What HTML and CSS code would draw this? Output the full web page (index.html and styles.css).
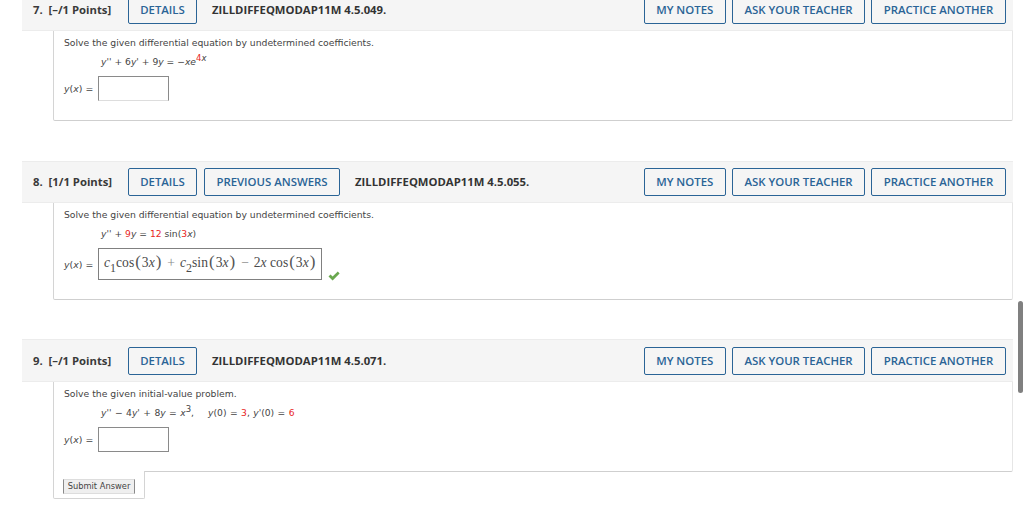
FILE: index.html
```html
<!DOCTYPE html>
<html lang="en">
<head>
<meta charset="utf-8">
<title>Questions</title>
<link rel="stylesheet" href="styles.css">
</head>
<body>
<main class="page">
  <section class="question q7">
    <header class="qhead">
      <span class="points">7. &nbsp;[–/1 Points]</span>
      <button class="btn btn-details">DETAILS</button>
      <span class="code">ZILLDIFFEQMODAP11M 4.5.049.</span>
      <span class="actions">
        <button class="btn btn-notes">MY NOTES</button>
        <button class="btn btn-ask">ASK YOUR TEACHER</button>
        <button class="btn btn-practice">PRACTICE ANOTHER</button>
      </span>
    </header>
    <div class="qbody">
      <p class="prompt">Solve the given differential equation by undetermined coefficients.</p>
      <p class="eq"><i>y''</i> + 6<i>y'</i> + 9<i>y</i> = −<i>xe</i><sup><span class="red">4</span><i>x</i></sup></p>
      <div class="answer"><span class="label"><i>y</i>(<i>x</i>) =</span><span class="input"></span></div>
    </div>
  </section>

  <section class="question q8">
    <header class="qhead">
      <span class="points">8. &nbsp;[1/1 Points]</span>
      <button class="btn btn-details">DETAILS</button>
      <button class="btn btn-prev">PREVIOUS ANSWERS</button>
      <span class="code">ZILLDIFFEQMODAP11M 4.5.055.</span>
      <span class="actions">
        <button class="btn btn-notes">MY NOTES</button>
        <button class="btn btn-ask">ASK YOUR TEACHER</button>
        <button class="btn btn-practice">PRACTICE ANOTHER</button>
      </span>
    </header>
    <div class="qbody">
      <p class="prompt">Solve the given differential equation by undetermined coefficients.</p>
      <p class="eq"><i>y''</i> + <span class="red">9</span><i>y</i> = <span class="red">12</span> sin(<span class="red">3</span><i>x</i>)</p>
      <div class="answer">
        <span class="label"><i>y</i>(<i>x</i>) =</span>
        <span class="filled"><i>c</i><sub>1</sub>cos<span class="paren">(</span>3<i>x</i><span class="paren">)</span><span class="op">+</span><i>c</i><sub>2</sub>sin<span class="paren">(</span>3<i>x</i><span class="paren">)</span><span class="op">−</span>2<i>x</i> cos<span class="paren">(</span>3<i>x</i><span class="paren">)</span></span>
        <svg class="check" viewBox="0 0 12 10" aria-hidden="true"><path d="M0.5 5.5 L2.5 3.6 L4.6 5.6 L9.8 0.6 L11.6 2.4 L4.6 9.4 Z" fill="#6aa84f"/></svg>
      </div>
    </div>
  </section>

  <section class="question q9">
    <header class="qhead">
      <span class="points">9. &nbsp;[–/1 Points]</span>
      <button class="btn btn-details">DETAILS</button>
      <span class="code">ZILLDIFFEQMODAP11M 4.5.071.</span>
      <span class="actions">
        <button class="btn btn-notes">MY NOTES</button>
        <button class="btn btn-ask">ASK YOUR TEACHER</button>
        <button class="btn btn-practice">PRACTICE ANOTHER</button>
      </span>
    </header>
    <div class="qbody">
      <p class="prompt">Solve the given initial-value problem.</p>
      <p class="eq"><i>y''</i> − 4<i>y'</i> + 8<i>y</i> = <i>x</i><sup>3</sup>,<span class="eq-gap"></span><i>y</i>(0) = <span class="red">3</span>, <i>y'</i>(0) = <span class="red">6</span></p>
      <div class="answer"><span class="label"><i>y</i>(<i>x</i>) =</span><span class="input"></span></div>
      <div class="submit-cell"><button class="submit">Submit Answer</button></div>
    </div>
  </section>
</main>
<div class="scrollbar"></div>
</body>
</html>
```
FILE: styles.css
```css
* { box-sizing: border-box; }
html, body { margin: 0; padding: 0; height: 507px; overflow: hidden; background: #fff; }
.page { width: 1024px; padding: 0 11px 0 22px; margin-top: -12px; }

.question { display: block; }
.q8 { margin-top: 40px; }
.q9 { margin-top: 39px; }

.qhead {
  display: flex; align-items: center; height: 43px; padding: 0 7px 0 11px;
  background: #f5f5f5; border-top: 1px solid #ececec; border-bottom: 1px solid #ececec;
  font-family: "Open Sans", sans-serif; font-size: 11.3px; font-weight: 700; color: #333;
}
.q8 .qhead { height: 42px; padding-bottom: 1px; }
.points { width: 95px; white-space: nowrap; color: #3a3a3a; }
.code { margin-left: 15px; white-space: nowrap; color: #333; }
.actions { margin-left: auto; display: flex; gap: 6px; }

.btn {
  height: 28px; padding: 0; background: #f5f5f5; border: 1px solid #2a6496; border-radius: 2px;
  font-family: "Open Sans", sans-serif; font-size: 11.4px; font-weight: 600; color: #2a6496;
  white-space: nowrap; text-align: center;
}
.btn-details { width: 69px; }
.q8 .btn-details { margin-right: 7px; }
.btn-prev { width: 136px; }
.btn-notes { width: 82.5px; }
.btn-ask { width: 133px; }
.btn-practice { width: 135px; }

.qbody {
  position: relative;
  margin-left: 31px; padding: 0 0 0 10px; border: 1px solid #e6e6e6; border-top: 0;
  border-left: 1px solid #d4d4d4; border-bottom: 1px solid #cfcfcf; border-radius: 0 0 2px 2px;
  font-family: "DejaVu Sans", sans-serif; font-size: 9.25px; color: #444;
}
.q7 .qbody { height: 90px; }
.q8 .qbody { height: 97px; }
.q9 .qbody { height: 90px; }

p { margin: 0; }
.prompt { padding-top: 6px; line-height: 12px; }
.eq { margin: 7px 0 0 37px; line-height: 12px; font-size: 9.2px; }
.eq-gap { display: inline-block; width: 14px; }
.q9 .eq { word-spacing: 0.5px; }
sup { font-size: 8.5px; line-height: 0; vertical-align: 4px; }
.red { color: #e8261c; }

.answer { display: flex; align-items: center; margin-top: 8px; }
.label { width: 34px; white-space: nowrap; font-size: 9.4px; }
.input { width: 71px; height: 25px; background: #fff; border: 1px solid #8a8a8a; border-bottom-color: #ddd; }
.q9 .input { border-bottom-color: #8a8a8a; }

.filled {
  display: block; width: 224px; height: 32px; margin-top: -1px; line-height: 26px; padding-left: 5px; white-space: nowrap;
  border: 1px solid #808080; background: #fff; font-family: "Liberation Serif", serif; font-size: 13.6px; color: #4a4a4a;
}
.filled sub { font-size: 12px; line-height: 0; vertical-align: -5px; }
.paren { font-size: 17px; padding: 0 1px; color: #555; }
.op { padding: 0 5px; color: #888; }
.check { width: 12px; height: 10px; margin: 23px 0 0 6px; }

.submit-cell {
  position: absolute; left: -1px; top: 89px; width: 92px; height: 28px; padding: 8px 0 0 9px; background: #fff;
  border-left: 1px solid #d4d4d4; border-bottom: 1px solid #d4d4d4; border-right: 1px solid #d4d4d4; border-radius: 0 0 2px 2px;
}
.submit {
  display: block; width: 72px; height: 15px; padding: 0; background: #efefef; border: 1px solid #8a8a8a; border-top-color: #ddd; border-bottom-color: #ddd; border-radius: 0;
  font-family: "DejaVu Sans", sans-serif; font-size: 8.3px; color: #444; line-height: 13px;
}

.scrollbar { position: fixed; left: 1018px; top: 301px; width: 5px; height: 92px; border-radius: 3px; background: #808080; }
```
